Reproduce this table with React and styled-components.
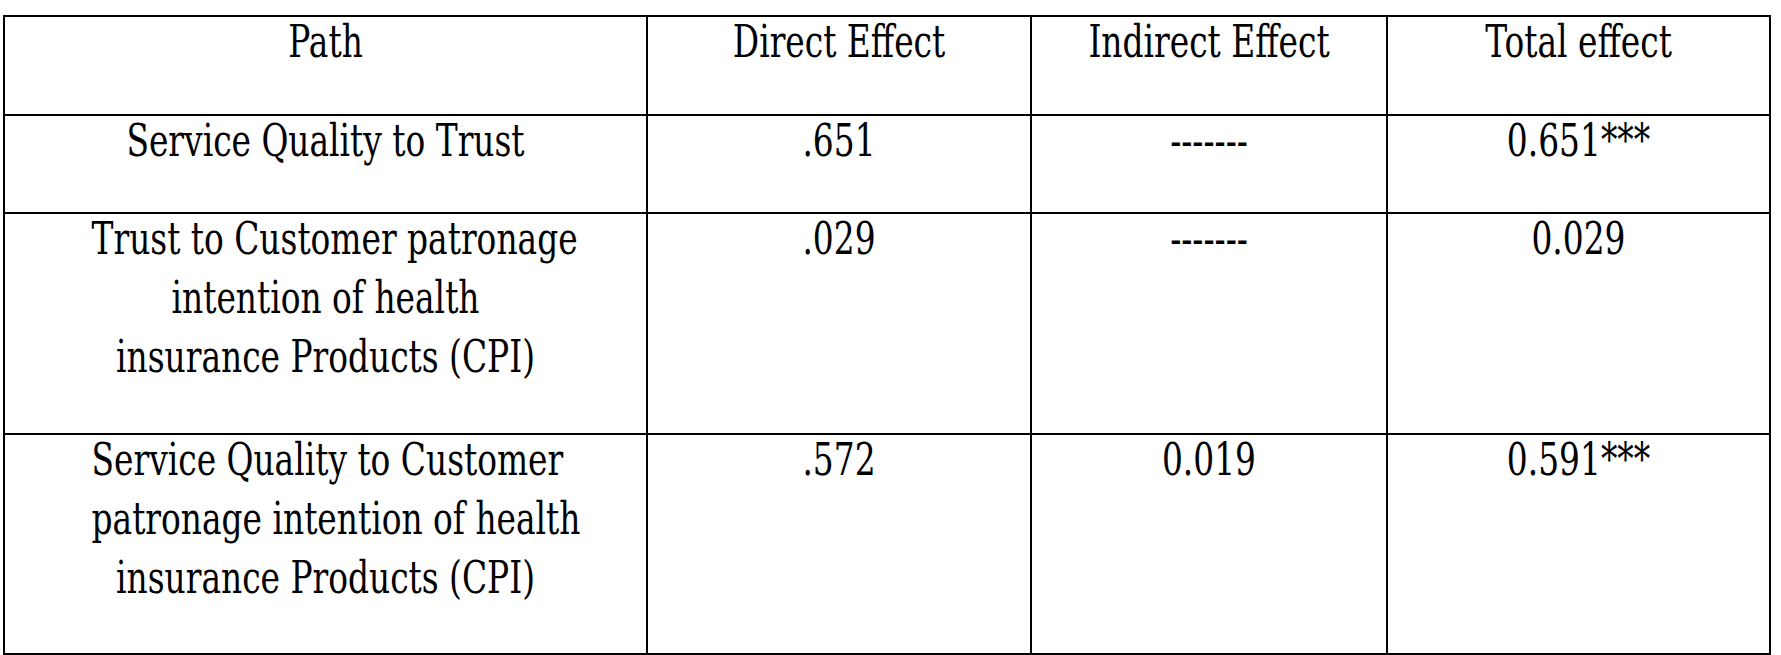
import React from "react";
import styled, { createGlobalStyle } from "styled-components";

const GlobalStyle = createGlobalStyle`
  html, body {
    margin: 0;
    padding: 0;
    background: #ffffff;
  }
  body {
    font-family: "DejaVu Serif", "Liberation Serif", serif;
    color: #000000;
  }
`;

const Page = styled.div`
  padding: 15px 0 0 3px;
`;

const Table = styled.table`
  width: 1766px;
  border-collapse: collapse;
  table-layout: fixed;
`;

const Col = styled.col`
  width: ${(p) => p.$width}px;
`;

const Row = styled.tr`
  height: ${(p) => p.$height}px;
`;

const Cell = styled.td`
  border: 2px solid #000000;
  padding: 0;
  vertical-align: top;
  text-align: center;
  font-size: 45px;
  line-height: 59px;
  white-space: nowrap;
  overflow: hidden;
`;

const Text = styled.div`
  margin-top: -5px;
  transform: scaleX(0.73);
  transform-origin: center top;
`;

const columns = [643, 384, 356, 383];

const rows = [
  {
    height: 99,
    cells: [["Path"], ["Direct Effect"], ["Indirect Effect"], ["Total effect"]],
  },
  {
    height: 98,
    cells: [["Service Quality to Trust"], [".651"], ["-------"], ["0.651***"]],
  },
  {
    height: 221,
    cells: [
      [
        "Trust to Customer patronage",
        "intention of health",
        "insurance Products (CPI)",
      ],
      [".029"],
      ["-------"],
      ["0.029"],
    ],
  },
  {
    height: 220,
    cells: [
      [
        "Service Quality to Customer",
        "patronage intention of health",
        "insurance Products (CPI)",
      ],
      [".572"],
      ["0.019"],
      ["0.591***"],
    ],
  },
];

const App = () => {
  return (
    <Page>
      <GlobalStyle />
      <Table>
        <colgroup>
          {columns.map((w, i) => (
            <Col key={i} $width={w} />
          ))}
        </colgroup>
        <tbody>
          {rows.map((row, i) => (
            <Row key={i} $height={row.height}>
              {row.cells.map((lines, j) => (
                <Cell key={j}>
                  <Text>
                    {lines.map((line, k) => (
                      <React.Fragment key={k}>
                        {k > 0 && <br />}
                        {line}
                      </React.Fragment>
                    ))}
                  </Text>
                </Cell>
              ))}
            </Row>
          ))}
        </tbody>
      </Table>
    </Page>
  );
};

export default App;
